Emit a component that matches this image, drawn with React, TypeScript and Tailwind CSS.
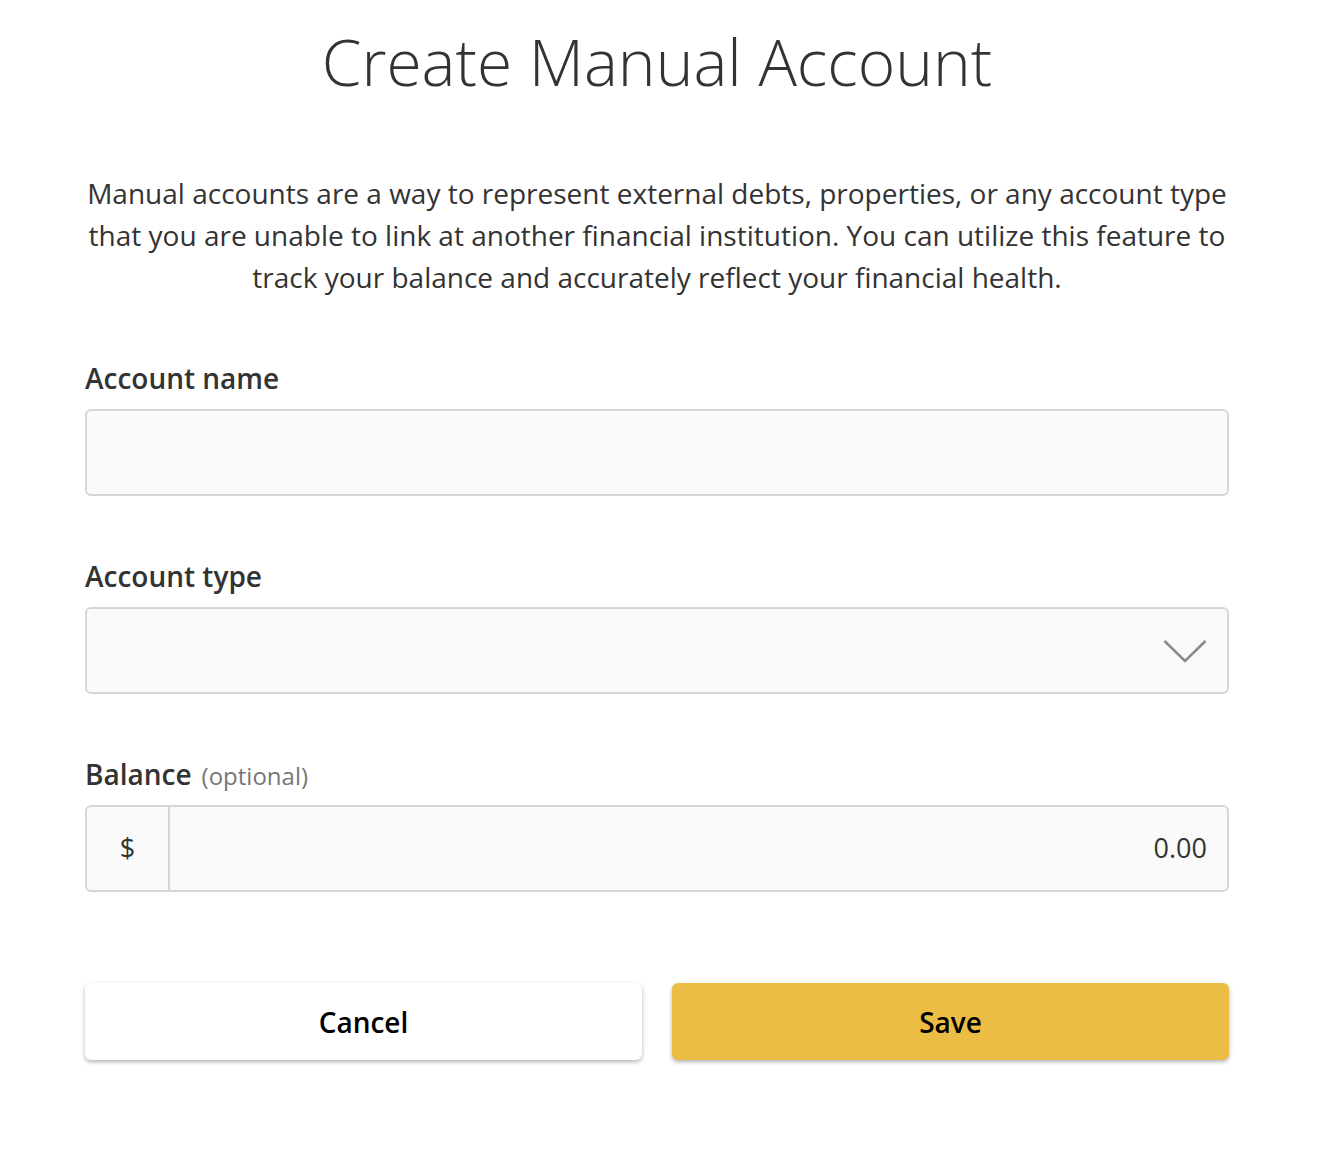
export default function App() {
  const font = { fontFamily: '"Open Sans", "Noto Sans", sans-serif' };
  return (
    <div className="min-h-[1166px] bg-white text-[#333]" style={font}>
      <div className="flex flex-col pl-[85px] pr-[89px]">
        <h1 className="mt-[22px] text-center text-[64px] font-light leading-[80px] text-[#333]">Create Manual Account</h1>

        <p className="mt-[70px] text-center text-[28px] leading-[42px] text-[#333]">
          Manual accounts are a way to represent external debts, properties, or any account type that you are unable to link at another financial institution. You can utilize this feature to track your balance and accurately reflect your financial health.
        </p>

        <label className="mt-[60px] text-[28px] font-semibold leading-[40px] text-[#333]">Account name</label>
        <div className="mt-[11px] h-[87px] rounded-md border-2 border-[#d6d6d6] bg-[#fafafa]" />

        <label className="mt-[60px] text-[28px] font-semibold leading-[40px] text-[#333]">Account type</label>
        <div className="mt-[11px] flex h-[87px] items-center justify-end rounded-md border-2 border-[#d6d6d6] bg-[#fafafa] pr-[20px]">
          <svg width="44" height="24" viewBox="0 0 44 24" fill="none">
            <path d="M1.5 2 L22 22 L42.5 2" stroke="#8a8a8a" strokeWidth="2.5" />
          </svg>
        </div>

        <div className="mt-[60px] flex h-[40px] items-baseline gap-[10px] leading-[40px]">
          <span className="text-[28px] font-semibold text-[#333]">Balance</span>
          <span className="text-[24px] text-[#777]">(optional)</span>
        </div>
        <div className="mt-[11px] flex h-[87px] rounded-md border-2 border-[#d6d6d6] bg-[#fafafa]">
          <div className="flex w-[83px] items-center justify-center border-r-2 border-[#d6d6d6] text-[27px] text-[#333]">$</div>
          <div className="flex flex-1 items-center justify-end pr-[20px] text-[27px] text-[#333]">0.00</div>
        </div>

        <div className="mt-[91px] grid grid-cols-2 gap-[30px]">
          <button className="h-[77px] rounded-md bg-white text-[28px] font-semibold text-black shadow-[0_2px_4px_rgba(0,0,0,0.3)]">Cancel</button>
          <button className="h-[77px] rounded-md bg-[#ecbd44] text-[28px] font-semibold text-black shadow-[0_2px_4px_rgba(0,0,0,0.3)]">Save</button>
        </div>
      </div>
    </div>
  );
}
